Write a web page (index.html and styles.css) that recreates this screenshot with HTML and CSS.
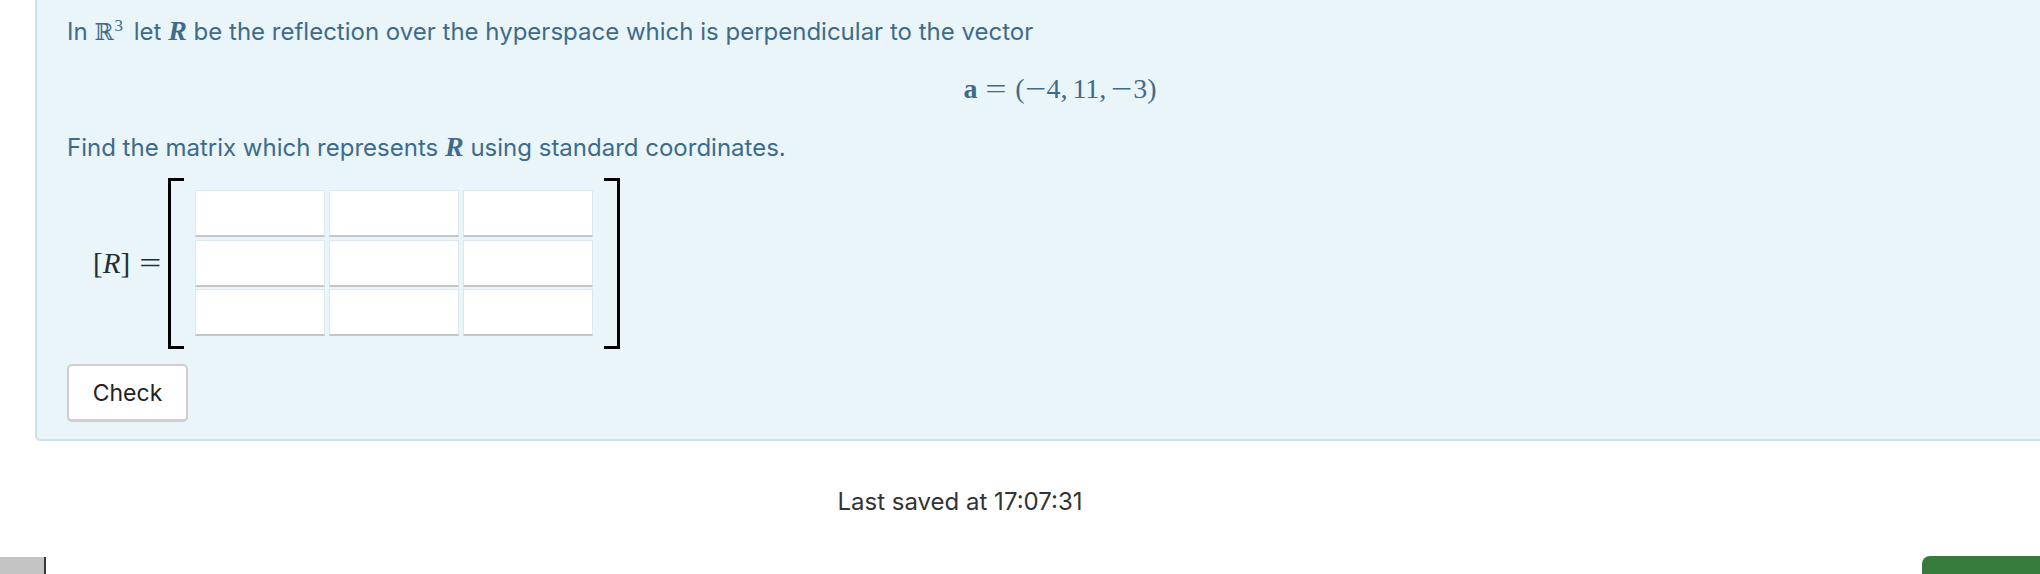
FILE: index.html
```html
<!DOCTYPE html>
<html lang="en">
<head>
    <meta charset="UTF-8" />
    <title>Question</title>
    <link rel="stylesheet" href="styles.css">
</head>
<body>
    <div class="question">
        <p class="prompt">In <span class="math"><span class="bb">ℝ</span><sup>3</sup></span> let <span class="mvar">R</span> be the reflection over the hyperspace which is perpendicular to the vector</p>
        <div class="display">
            <span class="vec">a</span><span class="rel">=</span>(<span class="op">−</span>4,<span class="thin"></span>11,<span class="thin"></span><span class="op">−</span>3)
        </div>
        <p class="prompt">Find the matrix which represents <span class="mvar">R</span> using standard coordinates.</p>
        <div class="answer">
            <span class="label">[<i>R</i>]<span class="rel">=</span></span>
            <div class="matrix">
                <span class="bracket left"></span>
                <div class="cells">
                    <input type="text"><input type="text"><input type="text">
                    <input type="text"><input type="text"><input type="text">
                    <input type="text"><input type="text"><input type="text">
                </div>
                <span class="bracket right"></span>
            </div>
        </div>
        <button class="check">Check</button>
    </div>

    <div class="saved">Last saved at 17:07:31</div>

    <div class="nav">
        <span class="nav-prev"></span>
        <span class="nav-next"></span>
    </div>
</body>
</html>
```
FILE: styles.css
```css
html, body {
    margin: 0;
    height: 574px;
    overflow: hidden;
}
body {
    font-family: Inter, "Open Sans", sans-serif;
    background: #ffffff;
    display: flex;
    flex-direction: column;
}
.question {
    margin: 0 -45px 0 35px;
    padding: 16px 30px 17px 30px;
    background-color: #e9f5f8;
    border: 2px solid #c9e3ea;
    border-top: none;
    border-radius: 0 0 5px 5px;
    color: #3e6b8b;
}
.prompt {
    margin: 0;
    font-size: 24px;
    line-height: 32px;
}
.math {
    font-family: "DejaVu Serif", serif;
    line-height: 0;
}
.bb {
    font-size: 23px;
}
.math sup {
    font-family: "Liberation Serif", serif;
    font-size: 17px;
    line-height: 0;
    margin-left: 1px;
    margin-right: 4px;
}
.mvar {
    font-family: "Liberation Serif", serif;
    font-style: italic;
    font-weight: bold;
    font-size: 28px;
    line-height: 0;
}
.display {
    margin: 25px 0 27px;
    text-align: center;
    font-family: "Liberation Serif", serif;
    font-size: 28px;
    line-height: 32px;
}
.vec {
    font-weight: bold;
}
.rel,
.op {
    display: inline-block;
    transform: scaleX(1.35);
}
.rel {
    margin: 0 11px;
}
.op {
    margin: 0 3px;
}
.thin {
    margin-left: 5px;
}
.answer {
    display: flex;
    align-items: center;
    gap: 6px;
    margin: 14px 0 15px;
    padding-left: 26px;
}
.label {
    font-family: "Liberation Serif", serif;
    font-size: 29px;
    color: #1d2f34;
}
.label .rel {
    margin: 0 4px 0 12px;
}
.matrix {
    display: flex;
    align-items: stretch;
}
.bracket {
    width: 13px;
    border: 3.5px solid #000;
}
.bracket.left {
    border-right: none;
    margin-right: 11px;
}
.bracket.right {
    border-left: none;
    margin-left: 11px;
}
.cells {
    display: grid;
    grid-template-columns: repeat(3, 130px);
    grid-auto-rows: 47px;
    column-gap: 4px;
    row-gap: 2.5px;
    margin: 12px 0 13px;
}
.cells input {
    box-sizing: border-box;
    width: 130px;
    height: 47px;
    margin: 0;
    background: #ffffff;
    border: 1px solid #dbe9ed;
    border-bottom: 2px solid #c3c6c8;
    outline: none;
}
.check {
    width: 121px;
    height: 58px;
    padding: 0;
    font-family: Inter, sans-serif;
    font-size: 23px;
    color: #222;
    background: #ffffff;
    border: 2px solid #cfcfcf;
    border-bottom-width: 3px;
    border-radius: 5px;
}
.saved {
    width: 1920px;
    margin-top: 46px;
    text-align: center;
    font-size: 24px;
    color: #333;
}
.nav {
    margin-top: auto;
    display: flex;
    justify-content: space-between;
    align-items: flex-end;
}
.nav-prev {
    width: 44px;
    height: 17px;
    background: #c4c4c4;
    border-right: 2px solid #3a3a3a;
}
.nav-next {
    width: 118px;
    height: 18px;
    background: #367a3c;
    border-radius: 8px 0 0 0;
}
```
